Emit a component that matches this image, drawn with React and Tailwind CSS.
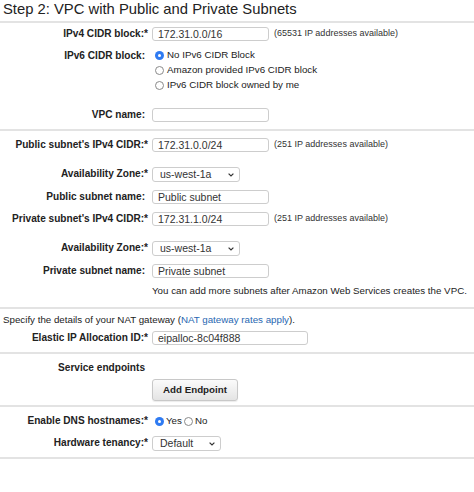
import React from 'react';

function Label({ children, star = false }) {
  return (
    <div className={`w-[148px] shrink-0 text-right text-[10.1px] font-bold text-[#222] ${star ? '' : 'pr-[3px]'}`}>
      {children}
    </div>
  );
}

function Input({ value = '', w = 'w-[117px]' }) {
  return (
    <div className={`${w} flex h-[14px] items-center rounded-[3px] border border-[#cdcdcd] bg-white pl-[5px] text-[10.5px] leading-none text-[#333]`}>
      {value}
    </div>
  );
}

function Select({ value, w = 'w-[88px]' }) {
  return (
    <div className={`${w} flex h-[15px] items-center justify-between rounded-[3px] border border-[#cdcdcd] bg-white pl-[7px] pr-[5px] text-[10.5px] leading-none text-[#333]`}>
      <span>{value}</span>
      <svg width="6" height="4" viewBox="0 0 6 4" className="mt-[1px]">
        <path d="M0.6 0.6 L3 3 L5.4 0.6" fill="none" stroke="#333" strokeWidth="1.2" />
      </svg>
    </div>
  );
}

function Radio({ checked = false }) {
  return checked ? (
    <span className="flex h-[9px] w-[9px] shrink-0 items-center justify-center rounded-full bg-[#2f7bf2]">
      <span className="h-[3px] w-[3px] rounded-full bg-white" />
    </span>
  ) : (
    <span className="block h-[9px] w-[9px] shrink-0 rounded-full border border-[#8a8a8a] bg-white" />
  );
}

function Row({ label, star, className = '', children }) {
  return (
    <div className={`flex h-[16px] items-center ${className}`}>
      <Label star={star}>{label}</Label>
      <div className="ml-[4px] flex items-center">{children}</div>
    </div>
  );
}

const Hint = ({ children }) => <span className="ml-[5px] text-[9px] text-[#333]">{children}</span>;

export default function App() {
  return (
    <div className="h-[492px] w-[474px] overflow-hidden bg-white font-['Liberation_Sans',Arial,sans-serif] text-[#333]">
      <div className="flex h-[23px] items-center border-b-2 border-[#e3e3e3] pl-[3px] pb-[2px] text-[14.8px] text-[#222]">
        Step 2: VPC with Public and Private Subnets
      </div>

      <div className="border-b-2 border-[#e3e3e3] pt-[3px] pb-[6px]">
        <Row label="IPv4 CIDR block:*" star>
          <Input value="172.31.0.0/16" />
          <Hint>(65531 IP addresses available)</Hint>
        </Row>
        <div className="mt-[6px] flex">
          <Label>IPv6 CIDR block:</Label>
          <div className="ml-[7px] flex flex-col text-[9.75px] text-[#222]">
            <div className="flex h-[15px] items-center gap-[3px]"><Radio checked />No IPv6 CIDR Block</div>
            <div className="flex h-[15px] items-center gap-[3px]"><Radio />Amazon provided IPv6 CIDR block</div>
            <div className="flex h-[15px] items-center gap-[3px]"><Radio />IPv6 CIDR block owned by me</div>
          </div>
        </div>
        <Row label="VPC name:" className="mt-[14px]">
          <Input />
        </Row>
      </div>

      <div className="border-b-2 border-[#e3e3e3] pt-[6px] pb-[9px]">
        <Row label="Public subnet's IPv4 CIDR:*" star>
          <Input value="172.31.0.0/24" />
          <Hint>(251 IP addresses available)</Hint>
        </Row>
        <Row label="Availability Zone:*" star className="mt-[13px]">
          <Select value="us-west-1a" />
        </Row>
        <Row label="Public subnet name:" className="mt-[7px]">
          <Input value="Public subnet" />
        </Row>
        <Row label="Private subnet's IPv4 CIDR:*" star className="mt-[6px]">
          <Input value="172.31.1.0/24" />
          <Hint>(251 IP addresses available)</Hint>
        </Row>
        <Row label="Availability Zone:*" star className="mt-[13px]">
          <Select value="us-west-1a" />
        </Row>
        <Row label="Private subnet name:" className="mt-[7px]">
          <Input value="Private subnet" />
        </Row>
        <div className="mt-[5px] flex h-[14px] items-center pl-[152px] text-[9.75px] text-[#222]">
          You can add more subnets after Amazon Web Services creates the VPC.
        </div>
      </div>

      <div className="border-b-2 border-[#e3e3e3] pt-[4px] pb-[6px]">
        <div className="flex h-[14px] items-center pl-[3px] text-[9.75px] text-[#222]">
          Specify the details of your NAT gateway (<span className="text-[#2867b2]">NAT gateway rates apply</span>).
        </div>
        <Row label="Elastic IP Allocation ID:*" star className="mt-[3px]">
          <Input value="eipalloc-8c04f888" w="w-[156px]" />
        </Row>
      </div>

      <div className="border-b-2 border-[#e3e3e3] pt-[7px] pb-[4px]">
        <div className="flex h-[14px] items-center">
          <Label>Service endpoints</Label>
        </div>
        <div className="mt-[4px] pl-[152px]">
          <div className="flex h-[22px] w-[86px] items-center justify-center rounded-[3px] border border-[#c8c8c8] bg-gradient-to-b from-[#fbfbfb] to-[#e4e4e4] text-[9.75px] font-bold text-[#222] shadow-[0_1px_1px_rgba(0,0,0,0.08)]">
            Add Endpoint
          </div>
        </div>
      </div>

      <div className="border-b-2 border-[#e3e3e3] pt-[6px] pb-[6px]">
        <Row label="Enable DNS hostnames:*" star>
          <div className="ml-[3px] flex items-center text-[9.75px] text-[#222]">
            <Radio checked />
            <span className="ml-[2px]">Yes</span>
            <span className="ml-[2px] flex"><Radio /></span>
            <span className="ml-[2px]">No</span>
          </div>
        </Row>
        <Row label="Hardware tenancy:*" star className="mt-[6px]">
          <Select value="Default" w="w-[69px]" />
        </Row>
      </div>
    </div>
  );
}
